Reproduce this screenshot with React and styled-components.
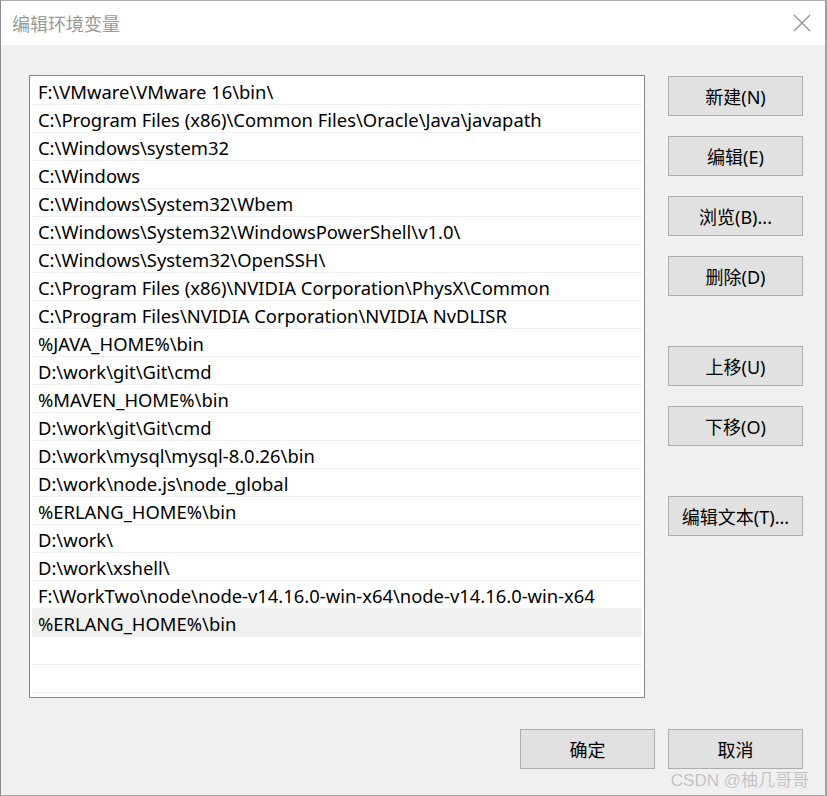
import React from 'react';
import styled, { createGlobalStyle } from 'styled-components';

const GlobalStyle = createGlobalStyle`
  html, body {
    margin: 0;
    padding: 0;
    background: #f0f0f0;
  }
  * {
    box-sizing: border-box;
  }
`;

const FONT = `"Noto Sans", "Noto Sans CJK SC", sans-serif`;

const Window = styled.div`
  position: relative;
  width: 827px;
  height: 796px;
  background: #f0f0f0;
  border-top: 1px solid #aaaaaa;
  border-right: 2px solid #a0a0a0;
  border-left: 1px solid #8c8c8c;
  border-bottom: 1px solid #aaaaaa;
  font-family: ${FONT};
  overflow: hidden;
`;

const TitleBar = styled.div`
  height: 44px;
  background: #ffffff;
  display: flex;
  align-items: center;
  justify-content: space-between;
  padding: 0 14px 0 11px;
`;

const Title = styled.span`
  font-size: 18px;
  color: #999999;
  font-family: "Noto Sans CJK SC", sans-serif;
`;

const CloseIcon = () => (
  <svg width="18" height="18" viewBox="0 0 18 18">
    <path d="M1 1 L17 17 M17 1 L1 17" stroke="#8a8a8a" strokeWidth="1.1" fill="none" />
  </svg>
);

const Body = styled.div`
  padding: 30px 22px 0 28px;
`;

const Main = styled.div`
  display: flex;
  gap: 23px;
`;

const List = styled.div`
  width: 616px;
  height: 623px;
  background: #ffffff;
  border: 1px solid #828790;
  padding: 1px 2px 0 2px;
  overflow: hidden;
`;

const Row = styled.div`
  height: 28px;
  border-bottom: 1px solid #efefef;
  background: ${p => (p.selected ? '#f0f0f0' : '#ffffff')};
  padding: 1px 0 0 6px;
  font-size: 18.4px;
  line-height: 27px;
  color: #000000;
  white-space: nowrap;
`;

const Side = styled.div`
  display: flex;
  flex-direction: column;
  padding-top: 1px;
`;

const Button = styled.button`
  width: 135px;
  height: 40px;
  margin-top: ${p => p.gap || 0}px;
  background: #e1e1e1;
  border: 1px solid #adadad;
  border-radius: 0;
  font-family: ${FONT};
  font-size: 18px;
  color: #000000;
  padding: 0;
  cursor: default;
`;

const Footer = styled.div`
  display: flex;
  justify-content: flex-end;
  gap: 13px;
  margin-top: 31px;
`;

const Watermark = styled.div`
  position: absolute;
  right: 16px;
  bottom: 4px;
  font-family: "Liberation Sans", "Noto Sans CJK SC", sans-serif;
  font-size: 17px;
  color: #c2c2c2;
  text-shadow: 0 0 1px #ffffff;
`;

const paths = [
  'F:\\VMware\\VMware 16\\bin\\',
  'C:\\Program Files (x86)\\Common Files\\Oracle\\Java\\javapath',
  'C:\\Windows\\system32',
  'C:\\Windows',
  'C:\\Windows\\System32\\Wbem',
  'C:\\Windows\\System32\\WindowsPowerShell\\v1.0\\',
  'C:\\Windows\\System32\\OpenSSH\\',
  'C:\\Program Files (x86)\\NVIDIA Corporation\\PhysX\\Common',
  'C:\\Program Files\\NVIDIA Corporation\\NVIDIA NvDLISR',
  '%JAVA_HOME%\\bin',
  'D:\\work\\git\\Git\\cmd',
  '%MAVEN_HOME%\\bin',
  'D:\\work\\git\\Git\\cmd',
  'D:\\work\\mysql\\mysql-8.0.26\\bin',
  'D:\\work\\node.js\\node_global',
  '%ERLANG_HOME%\\bin',
  'D:\\work\\',
  'D:\\work\\xshell\\',
  'F:\\WorkTwo\\node\\node-v14.16.0-win-x64\\node-v14.16.0-win-x64',
  '%ERLANG_HOME%\\bin',
  '',
  '',
];

const actions = [
  { label: '新建(N)', gap: 0 },
  { label: '编辑(E)', gap: 20 },
  { label: '浏览(B)...', gap: 20 },
  { label: '删除(D)', gap: 20 },
  { label: '上移(U)', gap: 50 },
  { label: '下移(O)', gap: 20 },
  { label: '编辑文本(T)...', gap: 50 },
];

export default function App() {
  return (
    <>
      <GlobalStyle />
      <Window>
        <TitleBar>
          <Title>编辑环境变量</Title>
          <CloseIcon />
        </TitleBar>
        <Body>
          <Main>
            <List>
              {paths.map((p, i) => (
                <Row key={i} selected={i === 19}>{p}</Row>
              ))}
            </List>
            <Side>
              {actions.map(a => (
                <Button key={a.label} gap={a.gap}>{a.label}</Button>
              ))}
            </Side>
          </Main>
          <Footer>
            <Button>确定</Button>
            <Button>取消</Button>
          </Footer>
        </Body>
        <Watermark>CSDN @柚几哥哥</Watermark>
      </Window>
    </>
  );
}
